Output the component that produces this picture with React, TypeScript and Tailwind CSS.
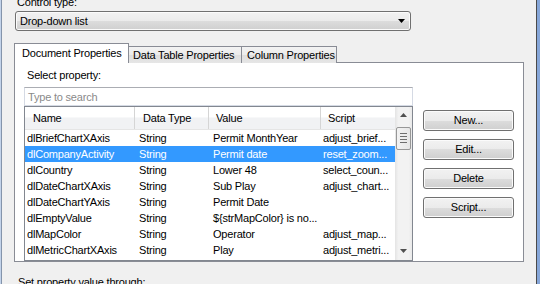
const rows = [
  { name: "dlBriefChartXAxis", type: "String", value: "Permit MonthYear", script: "adjust_brief..." },
  { name: "dlCompanyActivity", type: "String", value: "Permit date", script: "reset_zoom...", selected: true },
  { name: "dlCountry", type: "String", value: "Lower 48", script: "select_coun..." },
  { name: "dlDateChartXAxis", type: "String", value: "Sub Play", script: "adjust_chart..." },
  { name: "dlDateChartYAxis", type: "String", value: "Permit Date", script: "" },
  { name: "dlEmptyValue", type: "String", value: "${strMapColor} is no...", script: "" },
  { name: "dlMapColor", type: "String", value: "Operator", script: "adjust_map..." },
  { name: "dlMetricChartXAxis", type: "String", value: "Play", script: "adjust_metri..." },
];

const btnBg =
  "bg-[linear-gradient(to_bottom,#f2f2f2_0%,#ebebeb_50%,#dddddd_50%,#cfcfcf_100%)] shadow-[inset_0_0_0_1px_#fbfbfb]";

function WinButton({ label }: { label: string }) {
  return (
    <button
      className={`h-[21px] w-[91px] rounded-[3px] border border-[#707070] ${btnBg} flex items-center justify-center leading-none pt-px`}
    >
      {label}
    </button>
  );
}

export default function App() {
  return (
    <div className="w-[540px] h-[284px] overflow-hidden bg-[#f0f0f0] flex font-['Liberation_Sans',Arial,sans-serif] text-[11px] tracking-[-0.2px] text-black">
      {/* left window edge */}
      <div className="w-px bg-[#c3d3ea]" />
      <div className="w-px bg-[#8494ab]" />

      <div className="flex-1 flex flex-col pl-[12px] pr-[12px]">
        {/* Control type */}
        <div className="h-[13px] leading-[13px] mt-[-4px] pl-[3px]">Control type:</div>
        <div
          className={`ml-px mt-[2px] h-[20px] w-[396px] rounded-[3px] border border-[#707070] ${btnBg} flex items-center pl-[4px] pr-[5px] pt-px`}
        >
          <span className="flex-1">Drop-down list</span>
          <svg width="7" height="4" viewBox="0 0 7 4">
            <path d="M0 0h7L3.5 4z" fill="#000" />
          </svg>
        </div>

        {/* Tabs */}
        <div className="mt-[12px] flex items-end relative z-10 -mb-px">
          <div className="h-[20px] w-[115px] bg-white border border-b-0 border-[#898c95] pl-[7px] flex items-center">
            Document Properties
          </div>
          <div className="h-[17px] w-[113px] border-t border-r border-[#898c95] bg-[linear-gradient(to_bottom,#f3f3f3_0%,#ebebeb_50%,#dedede_50%,#e6e6e6_100%)] pl-[4px] flex items-center pt-px">
            Data Table Properties
          </div>
          <div className="h-[17px] w-[95px] border-t border-r border-[#898c95] bg-[linear-gradient(to_bottom,#f3f3f3_0%,#ebebeb_50%,#dedede_50%,#e6e6e6_100%)] pl-[5px] flex items-center pt-px">
            Column Properties
          </div>
        </div>

        {/* Panel */}
        <div className="h-[200px] bg-white border border-[#898c95] flex pl-[9px]">
          <div className="flex flex-col w-[389px]">
            <div className="h-[13px] leading-[13px] mt-[6px] pl-[3px]">Select property:</div>
            <div className="mt-[5px] h-[19px] border border-[#d5dae4] border-t-[#abadb3] flex items-center pl-[3px] pt-[2px] text-[#8a8a8a]">
              Type to search
            </div>
            {/* list */}
            <div className="h-[155px] border border-[#828790] flex overflow-hidden">
              <div className="w-[370px] flex flex-col">
                <div className="h-[23px] flex border-b border-[#e5e5e5] bg-[linear-gradient(to_bottom,#ffffff_0%,#ffffff_45%,#f1f2f4_50%,#f1f2f4_100%)]">
                  <div className="w-[110px] border-r border-[#d5d5d5] pl-[8px] pt-[2px] flex items-center">Name</div>
                  <div className="w-[74px] border-r border-[#d5d5d5] pl-[8px] pt-[2px] flex items-center">Data Type</div>
                  <div className="w-[112px] border-r border-[#d5d5d5] pl-[7px] pt-[2px] flex items-center">Value</div>
                  <div className="w-[74px] pl-[7px] pt-[2px] flex items-center">Script</div>
                </div>
                {rows.map((r) => (
                  <div
                    key={r.name}
                    className={`h-[16px] leading-[15px] pt-px flex whitespace-nowrap ${
                      r.selected ? "bg-[#3399ff] text-white" : ""
                    }`}
                  >
                    <div className="w-[110px] pl-[2px]">{r.name}</div>
                    <div className="w-[74px] pl-[4px]">{r.type}</div>
                    <div className="w-[112px] pl-[4px] overflow-visible">{r.value}</div>
                    <div className="w-[74px] pl-[2px]">{r.script}</div>
                  </div>
                ))}
              </div>
              {/* scrollbar */}
              <div className="w-[17px] flex flex-col bg-[linear-gradient(to_right,#e4e4e4_0%,#f2f2f2_20%,#f2f2f2_80%,#e9e9e9_100%)]">
                <div className="h-[17px] flex items-center justify-center">
                  <svg width="7" height="4" viewBox="0 0 7 4">
                    <path d="M3.5 0L7 4H0z" fill="#505050" />
                  </svg>
                </div>
                <div className="mt-[3px] mx-[1px] h-[23px] rounded-[2px] border border-[#979797] bg-[linear-gradient(to_right,#f3f3f3,#e6e6e6)] flex flex-col items-center justify-center gap-[2px]">
                  <div className="w-[7px] h-px bg-[#6e6e6e]" />
                  <div className="w-[7px] h-px bg-[#6e6e6e]" />
                  <div className="w-[7px] h-px bg-[#6e6e6e]" />
                  <div className="w-[7px] h-px bg-[#6e6e6e]" />
                </div>
                <div className="flex-1" />
                <div className="h-[17px] flex items-center justify-center">
                  <svg width="7" height="4" viewBox="0 0 7 4">
                    <path d="M0 0h7L3.5 4z" fill="#505050" />
                  </svg>
                </div>
              </div>
            </div>
          </div>

          {/* buttons */}
          <div className="ml-[10px] pt-[47px] flex flex-col gap-[8px]">
            <WinButton label="New..." />
            <WinButton label="Edit..." />
            <WinButton label="Delete" />
            <WinButton label="Script..." />
          </div>
        </div>

        <div className="mt-[14px] h-[13px] leading-[13px] pl-[4px]">Set property value through:</div>
      </div>

      {/* right window edge */}
      <div className="w-px bg-[#4a4a4a]" />
      <div className="w-[3px] bg-[#86a6d8]" />
    </div>
  );
}
